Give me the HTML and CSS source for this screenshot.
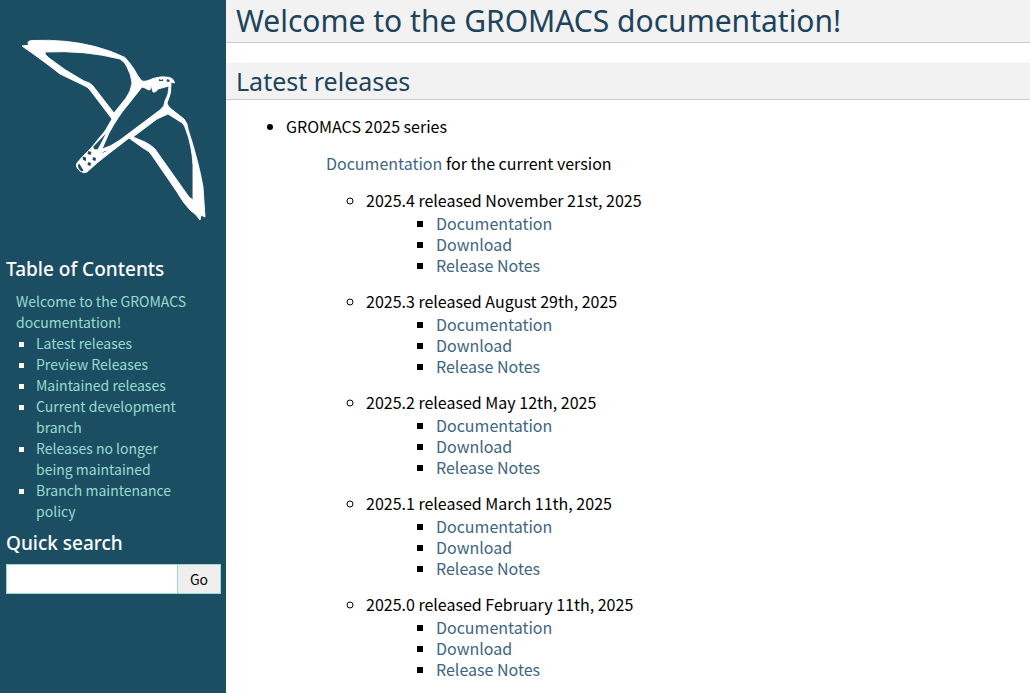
FILE: index.html
```html
<!DOCTYPE html>
<html lang="en">
<head>
<meta charset="utf-8">
<title>Welcome to the GROMACS documentation!</title>
<link rel="stylesheet" href="styles.css">
</head>
<body>
<div class="page">
  <aside class="sidebar">
    <a class="logo" href="#" aria-label="GROMACS home">
      <svg viewBox="16 30 200 200">
        <path fill="#fff" stroke="#fff" stroke-width="0.9" stroke-linejoin="round" fill-rule="evenodd" d="M22 46L29 45Q26 41 32 40.500Q66 39 95 46.500Q112 51 125 57.500Q130 63 134 69Q138 77 142 81Q146 82 153 78.500Q162 75.500 170 77.500Q174 79 174.500 83L171 82Q172 93 167 103Q168 106 170 108L184 119Q188 124 188 129Q199 163 203 187L205 217L203 216L201 215L200 220Q195 213 191 211Q183 203 177 192L153 157Q150 151 143 148L129 138L120 145L107 155L97 163L87 172Q84 174 80 171Q75 167 77 163L83 156L92 147L100 137L105 131L112 119L90 90Q88 87 83 85L60 74Q45 62 22 46Z
        M45 52Q85 50 120 59Q125 62 127 67Q131 74 132 83Q131 91 126 98L114 113L93 86Q91 83 84 81Q64 70 49 58Q44 54 45 52Z
        M142 87L145 88Q148 90 150 90L151 85L153 92Q156 93 158 89L169 86Q169 94 165 101Q165 106 160 110L120 140Q110 147 102 149L109 133Q119 115 127 106Z
        M168 114L179 121Q184 123 186 130Q192 146 193 165L193 200L189 197L155 149Q151 145 145 142L133 137L157 119Z
        M107 132L102 142L98 149.500Q93 151 93 146.500Z M110 150L100 154.500L104 151Z"/>
        <path fill="#1c4e63" d="M88 151L91.500 152L90.500 155L87.500 154Z M82.500 156.500L86 157.500L86 161L83 160Z M93 157L96 158L95.500 161L92.500 160Z M88 162L91 163L90.500 166L87.500 165Z M78 164.500L79.500 164L83.500 170.500L82 171.500Q77.500 169 78 164.500Z M159 79L161 80L163 79L163 81L159 81Z M167 79L169.500 80L169.500 82L166.500 81.500Z"/>
      </svg>
    </a>
    <h3 class="side-title">Table of Contents</h3>
    <nav class="toc">
      <a href="#">Welcome to the GROMACS documentation!</a>
      <ul>
        <li><a href="#">Latest releases</a></li>
        <li><a href="#">Preview Releases</a></li>
        <li><a href="#">Maintained releases</a></li>
        <li><a href="#">Current development branch</a></li>
        <li><a href="#">Releases no longer being maintained</a></li>
        <li><a href="#">Branch maintenance policy</a></li>
      </ul>
    </nav>
    <h3 class="side-title" id="search-label">Quick search</h3>
    <form class="search">
      <input type="text" name="q" aria-labelledby="search-label">
      <button type="submit">Go</button>
    </form>
  </aside>
  <main class="content">
    <h1>Welcome to the GROMACS documentation!</h1>
    <h2>Latest releases</h2>
    <ul class="series">
      <li>
        <p>GROMACS 2025 series</p>
        <div class="detail">
          <p><a href="#">Documentation</a> for the current version</p>
          <ul class="releases">
            <li><p>2025.4 released November 21st, 2025</p>
              <ul class="links"><li><a href="#">Documentation</a></li><li><a href="#">Download</a></li><li><a href="#">Release Notes</a></li></ul></li>
            <li><p>2025.3 released August 29th, 2025</p>
              <ul class="links"><li><a href="#">Documentation</a></li><li><a href="#">Download</a></li><li><a href="#">Release Notes</a></li></ul></li>
            <li><p>2025.2 released May 12th, 2025</p>
              <ul class="links"><li><a href="#">Documentation</a></li><li><a href="#">Download</a></li><li><a href="#">Release Notes</a></li></ul></li>
            <li><p>2025.1 released March 11th, 2025</p>
              <ul class="links"><li><a href="#">Documentation</a></li><li><a href="#">Download</a></li><li><a href="#">Release Notes</a></li></ul></li>
            <li><p>2025.0 released February 11th, 2025</p>
              <ul class="links"><li><a href="#">Documentation</a></li><li><a href="#">Download</a></li><li><a href="#">Release Notes</a></li></ul></li>
          </ul>
        </div>
      </li>
    </ul>
  </main>
</div>
</body>
</html>
```
FILE: styles.css
```css
* { box-sizing: border-box; }
body {
  margin: 0;
  background: #fff;
  color: #000;
  font: 16px/21px "Noto Sans CJK SC", sans-serif;
}
a { text-decoration: none; color: #3e6580; }
.page { display: flex; min-height: 100vh; }

.sidebar {
  flex: 0 0 226px;
  min-width: 0;
  padding: 30px 5px 0 6px;
  background: #1c4e63;
  color: #fff;
}
.sidebar a { color: #98dbcc; }
.logo { display: block; padding: 0 5px 0 10px; }
.logo svg { display: block; width: 100%; height: auto; }
.side-title {
  margin: 0;
  font: 500 19px/24px "Trebuchet MS", "Noto Sans", sans-serif;
}
.logo + .side-title { margin-top: 27px; }
.toc { margin: 10px 25px 9px 10px; font-size: 14px; }
.toc ul { margin: 0; padding-left: 20px; list-style: square; }
.search { display: flex; margin-top: 9px; font-size: 14px; }
.search input {
  flex: 1;
  min-width: 0;
  height: 30px;
  border: 1px solid #98dbcc;
  background: #fff;
  font: inherit;
}
.search button {
  width: 43px;
  height: 30px;
  padding: 0;
  border: 1px solid #98dbcc;
  border-left: 0;
  background: #efefef;
  color: #000;
  font: inherit;
}

.content { flex: 1; min-width: 0; }
h1, h2 {
  margin: 0;
  padding: 0 10px;
  border-bottom: 1px solid #ccc;
  background: #f2f2f2;
  color: #20435c;
  font-family: "Trebuchet MS", "Noto Sans", sans-serif;
  font-weight: 400;
}
h1 { font-size: 30px; line-height: 42px; }
h2 { margin-top: 20px; font-size: 25px; line-height: 36px; }
.series { margin: 16px 0 0; padding-left: 60px; list-style: disc; }
.series p { margin: 0 0 16px; }
.detail { padding-left: 40px; }
.releases { margin: 0; padding-left: 40px; list-style: circle; }
.releases p { margin: 0; }
.links { margin: 2px 0 15px; padding-left: 70px; list-style: square; }
```
